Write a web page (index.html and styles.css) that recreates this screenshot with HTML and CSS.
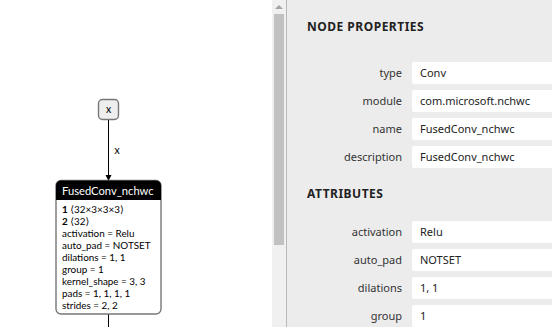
FILE: index.html
```html
<!DOCTYPE html>
<html lang="en">
<head>
    <meta charset="UTF-8">
    <title>Node Properties</title>
    <link rel="stylesheet" href="styles.css">
</head>
<body>
    <div class="graph">
        <svg class="canvas" width="272" height="327" viewBox="0 0 272 327">
            <!-- input node -->
            <rect class="input-node" x="98.5" y="99.5" width="20" height="20" rx="4"></rect>
            <text class="input-label" x="108.5" y="113" text-anchor="middle">x</text>

            <!-- edge x -> conv -->
            <line class="edge" x1="108.5" y1="120" x2="108.5" y2="176"></line>
            <path class="arrow" d="M105.5 175 L108.5 181 L111.5 175 Z"></path>
            <text class="edge-label" x="114.5" y="154">x</text>

            <!-- conv node -->
            <rect class="node-box" x="56" y="180.5" width="105" height="133.5" rx="5"></rect>
            <path class="node-head" d="M56 200 V185.5 A5 5 0 0 1 61 180.5 H156 A5 5 0 0 1 161 185.5 V200 Z"></path>
            <text class="node-title" x="62" y="194.5">FusedConv_nchwc</text>

            <text class="node-line" x="62" y="212.5"><tspan class="bold">1</tspan> ⟨32×3×3×3⟩</text>
            <text class="node-line" x="62" y="224.5"><tspan class="bold">2</tspan> ⟨32⟩</text>
            <text class="node-line" x="62" y="236.5">activation = Relu</text>
            <text class="node-line" x="62" y="248.5">auto_pad = NOTSET</text>
            <text class="node-line" x="62" y="260.5">dilations = 1, 1</text>
            <text class="node-line" x="62" y="272.5">group = 1</text>
            <text class="node-line" x="62" y="284.5">kernel_shape = 3, 3</text>
            <text class="node-line" x="62" y="296.5">pads = 1, 1, 1, 1</text>
            <text class="node-line" x="62" y="308.5">strides = 2, 2</text>

            <!-- edge out -->
            <line class="edge" x1="108.5" y1="314.5" x2="108.5" y2="327"></line>
        </svg>
    </div>

    <div class="scrollbar">
        <div class="scroll-arrow"></div>
        <div class="scroll-thumb"></div>
    </div>

    <div class="sidebar">
        <div class="section-title first">NODE PROPERTIES</div>
        <div class="props">
            <div class="prop-name">type</div>
            <div class="prop-value">Conv</div>
            <div class="prop-name">module</div>
            <div class="prop-value">com.microsoft.nchwc</div>
            <div class="prop-name">name</div>
            <div class="prop-value">FusedConv_nchwc</div>
            <div class="prop-name">description</div>
            <div class="prop-value">FusedConv_nchwc</div>
        </div>

        <div class="section-title">ATTRIBUTES</div>
        <div class="props">
            <div class="prop-name">activation</div>
            <div class="prop-value">Relu</div>
            <div class="prop-name">auto_pad</div>
            <div class="prop-value">NOTSET</div>
            <div class="prop-name">dilations</div>
            <div class="prop-value">1, 1</div>
            <div class="prop-name">group</div>
            <div class="prop-value">1</div>
        </div>
    </div>
</body>
</html>
```

FILE: styles.css
```css
html, body {
    margin: 0;
    padding: 0;
    height: 100%;
    overflow: hidden;
}

body {
    display: flex;
    font-family: 'Noto Sans', 'DejaVu Sans', sans-serif;
    color: #333;
    background: white;
}

.graph {
    width: 272px;
    flex: none;
}

.canvas {
    display: block;
}

.input-node {
    fill: #eee;
    stroke: #777;
    stroke-width: 1.4;
}

.input-label,
.edge-label {
    font-family: 'Lato', sans-serif;
    font-size: 10.5px;
    fill: #000;
}

.edge {
    stroke: #000;
    stroke-width: 1;
}

.arrow {
    fill: #000;
}

.node-box {
    fill: white;
    stroke: #777;
    stroke-width: 1.4;
}

.node-head {
    fill: #000;
}

.node-title {
    font-family: 'Lato', sans-serif;
    font-size: 11.2px;
    fill: white;
}

.node-line {
    font-family: 'Lato', 'DejaVu Sans', sans-serif;
    font-size: 9.9px;
    fill: #000;
}

.bold {
    font-weight: bold;
}

.scrollbar {
    width: 14px;
    flex: none;
    background: #f0f0f0;
    border-right: 1px solid #b8b8b8;
}

.scroll-arrow {
    width: 0;
    height: 0;
    margin: 5px auto 0;
    border-left: 4px solid transparent;
    border-right: 4px solid transparent;
    border-bottom: 4px solid #a3a3a3;
}

.scroll-thumb {
    margin: 5px 2px 0;
    height: 231px;
    background: #c1c1c1;
}

.sidebar {
    flex: 1;
    background: #ececec;
    padding: 19px 0 0 20px;
    overflow: hidden;
}

.section-title {
    font-size: 12px;
    font-weight: bold;
    line-height: 16px;
    letter-spacing: 0.5px;
    color: #222;
    margin: 18px 0 19px;
}

.section-title.first {
    margin: 0 0 27px;
}

.props {
    display: grid;
    grid-template-columns: 95px 1fr;
    grid-auto-rows: 22px;
    column-gap: 10px;
    row-gap: 6px;
    font-size: 11px;
}

.prop-name {
    text-align: right;
    line-height: 22px;
    color: #333;
}

.prop-value {
    background: white;
    line-height: 22px;
    padding-left: 8px;
    white-space: nowrap;
    color: #222;
    border-radius: 2px 0 0 2px;
}
```
